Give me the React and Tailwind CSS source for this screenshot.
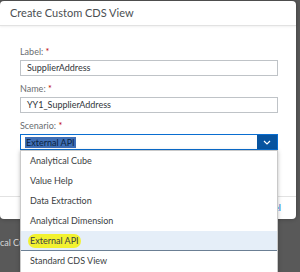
import React from "react";

const font = { fontFamily: '"Lato", "Open Sans", Arial, sans-serif' };

function Field({ label, children }) {
  return (
    <div className="flex flex-col">
      <div className="h-[14px] mb-[1px] text-[9px] leading-[14px] text-[#6a6d70]">
        {label}: <span className="text-[#bb0000]">*</span>
      </div>
      {children}
    </div>
  );
}

const items = [
  "Analytical Cube",
  "Value Help",
  "Data Extraction",
  "Analytical Dimension",
  "External API",
  "Standard CDS View",
];

export default function App() {
  return (
    <div
      className="relative w-[300px] h-[272px] overflow-hidden bg-[#595959]"
      style={font}
    >
      {/* page behind dialog */}
      <div className="flex flex-col pt-[236px]">
        <div className="ml-[-28px] text-[9px] leading-[14px] text-[#d8d8d8]">
          Analytical Cube
        </div>
        <div className="ml-[85px] mt-[13px] text-[9px] leading-[12px] text-[#cfcfcf]">
          Last extended on
        </div>
      </div>

      {/* dialog */}
      <div className="absolute left-0 top-[1px] w-[296px] h-[218px] bg-white rounded-[4px] flex flex-col shadow-[0_0_4px_rgba(0,0,0,0.3)]">
        <div className="h-[25px] flex items-center pl-[10px] border-b border-[#e2e2e2] shadow-[0_1px_2px_rgba(0,0,0,0.06)] text-[11px] text-[#4a4e52]">
          Create Custom CDS View
        </div>
        <div className="flex-1 flex flex-col gap-[6px] pt-[19px] pl-[20px] pr-[18px]">
          <Field label="Label">
            <div className="h-[16px] border border-[#bfc3c7] flex items-center pl-[6px] text-[9px] text-[#32363a]">
              SupplierAddress
            </div>
          </Field>
          <Field label="Name">
            <div className="h-[16px] border border-[#bfc3c7] flex items-center pl-[6px] text-[9px] text-[#32363a]">
              YY1_SupplierAddress
            </div>
          </Field>
          <Field label="Scenario">
            <div className="relative">
              <div className="h-[16px] border border-[#0a6ed1] flex items-center text-[9px]">
                <div className="flex-1 pl-[4px] flex items-center">
                  <span className="bg-[#3f6fb6] text-[#0b1f3d] px-[1px] leading-[11px]">
                    External API
                  </span>
                </div>
                <div className="w-[20px] h-full bg-[#0854a0] flex items-center justify-center">
                  <svg width="8" height="5" viewBox="0 0 8 5">
                    <path
                      d="M1 1 L4 4 L7 1"
                      fill="none"
                      stroke="white"
                      strokeWidth="1.2"
                    />
                  </svg>
                </div>
              </div>
              {/* dropdown list */}
              <div className="absolute left-0 right-0 top-full z-10 bg-white border border-[#c9c9c9] shadow-[0_1px_4px_rgba(0,0,0,0.25)] flex flex-col pb-[1px]">
                {items.map((t) => {
                  const sel = t === "External API";
                  return (
                    <div
                      key={t}
                      className={
                        sel
                          ? "h-[20px] flex items-center pl-[9px] text-[9px] text-[#3a3e42] bg-[#e5eef8] border-b border-[#6b7f94]"
                          : "h-[20px] flex items-center pl-[9px] text-[9px] text-[#3a3e42]"
                      }
                    >
                      {sel ? (
                        <span className="bg-[#f2f230] rounded-[7px] px-[2px] ml-[-2px] leading-[14px]">
                          {t}
                        </span>
                      ) : (
                        t
                      )}
                    </div>
                  );
                })}
              </div>
            </div>
          </Field>
        </div>
        <div className="h-[23px] border-t border-[#e2e2e2] flex items-center justify-end pr-[15px] text-[9px] text-[#0a6ed1]">
          Cancel
        </div>
      </div>
    </div>
  );
}
